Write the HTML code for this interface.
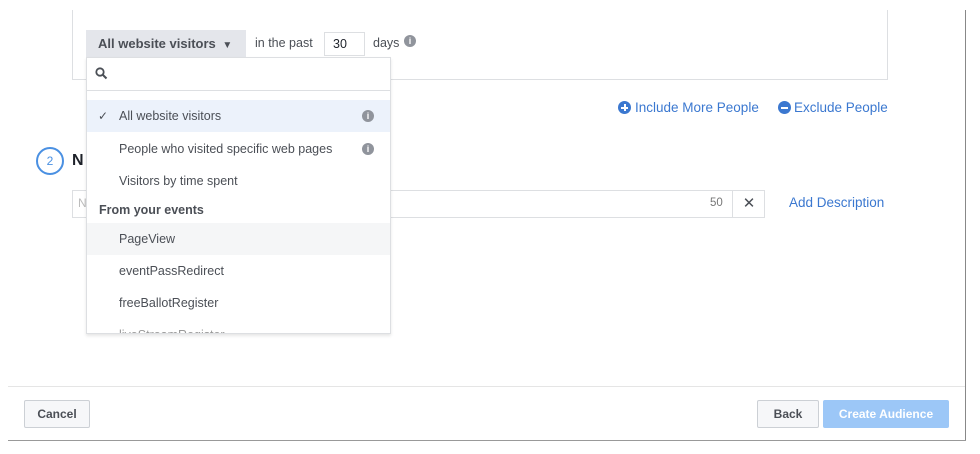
<!DOCTYPE html>
<html><head><style>
*{margin:0;padding:0;box-sizing:border-box}
body{width:980px;height:454px;background:#fff;font-family:"Liberation Sans",sans-serif;position:relative;overflow:hidden;color:#4b4f56}
.a{position:absolute}
.blue{color:#3b78d0;font-size:13.5px}
.item{position:absolute;left:0;width:304px;height:32px;font-size:12.5px;color:#4b4f56;line-height:32px;padding-left:32px}
.info{position:absolute;right:17px;top:10px;width:12px;height:12px;border-radius:50%;background:#90949c;color:#fff;font-size:9px;line-height:12px;text-align:center;font-weight:bold}
.btn{position:absolute;border:1px solid #ccd0d5;background:#f6f7f9;border-radius:2px;font-size:12px;font-weight:bold;color:#4b4f56;text-align:center;line-height:26px}
</style></head><body>
<div class="a" style="left:965px;top:10px;width:1px;height:431px;background:#888"></div>
<div class="a" style="left:8px;top:440px;width:958px;height:1px;background:#999"></div>
<div class="a" style="left:8px;top:386px;width:957px;height:1px;background:#e5e5e5"></div>
<div class="a" style="left:72px;top:10px;width:816px;height:70px;border:1px solid #dddfe2;border-top:none"></div>
<div class="a" style="left:86px;top:30px;width:160px;height:27px;background:#e4e6eb;font-size:13px;font-weight:bold;line-height:27px;padding-left:12px;color:#4b4f56">All website visitors <span style="font-size:10px;margin-left:3px">▼</span></div>
<div class="a" style="left:255px;top:36px;font-size:12.5px">in the past</div>
<div class="a" style="left:324px;top:32px;width:41px;height:24px;border:1px solid #dddfe2;font-size:12.5px;line-height:22px;padding-left:8px;color:#1d2129">30</div>
<div class="a" style="left:373px;top:36px;font-size:12.5px">days</div>
<div class="a" style="left:404px;top:35px;width:12px;height:12px;border-radius:50%;background:#90949c;color:#fff;font-size:9px;line-height:12px;text-align:center;font-weight:bold">i</div>
<div class="a" style="left:618px;top:101px;width:13px;height:13px;border-radius:50%;background:#3b78d0"><div style="position:absolute;left:3px;top:5.5px;width:7px;height:2px;background:#fff"></div><div style="position:absolute;left:5.5px;top:3px;width:2px;height:7px;background:#fff"></div></div>
<div class="a blue" style="left:635px;top:100px">Include More People</div>
<div class="a" style="left:778px;top:101px;width:13px;height:13px;border-radius:50%;background:#3b78d0"><div style="position:absolute;left:3px;top:5.5px;width:7px;height:2px;background:#fff"></div></div>
<div class="a blue" style="left:794px;top:100px">Exclude People</div>
<div class="a" style="left:36px;top:147px;width:28px;height:28px;border:2px solid #4a90e2;border-radius:50%;color:#4a90e2;font-size:12px;text-align:center;line-height:24px">2</div>
<div class="a" style="left:72px;top:152px;font-size:16px;font-weight:bold;color:#1d2129">N</div>
<div class="a" style="left:72px;top:190px;width:693px;height:28px;border:1px solid #dddfe2"></div>
<div class="a" style="left:78px;top:196px;font-size:12px;color:#bbb">N</div>
<div class="a" style="left:710px;top:197px;font-size:11.5px;color:#777">50</div>
<div class="a" style="left:732px;top:190px;width:33px;height:28px;border-left:1px solid #dddfe2;text-align:center;line-height:27px;font-size:15px;color:#4b4f56">✕</div>
<div class="a blue" style="left:789px;top:195px">Add Description</div>
<div class="a" style="left:86px;top:57px;width:305px;height:277px;background:#fff;border:1px solid #dddfe2;box-shadow:0 2px 3px rgba(0,0,0,.1);overflow:hidden">
 <div class="a" style="left:0;top:0;width:304px;height:33px;border-bottom:1px solid #dddfe2">
  <svg class="a" style="left:8px;top:9px" width="13" height="13" viewBox="0 0 13 13"><circle cx="5" cy="5" r="3.7" fill="none" stroke="#4b4f56" stroke-width="1.8"/><path d="M8 8l3.5 3.5" stroke="#4b4f56" stroke-width="2"/></svg>
 </div>
 <div class="item" style="top:42px;background:#ecf2fb">All website visitors<span class="a" style="left:11px;top:0;font-size:12px">✓</span><span class="info">i</span></div>
 <div class="item" style="top:75px">People who visited specific web pages<span class="info">i</span></div>
 <div class="item" style="top:107px">Visitors by time spent</div>
 <div class="a" style="left:12px;top:145px;font-size:12.5px;font-weight:bold;color:#4b4f56">From your events</div>
 <div class="item" style="top:165px;background:#f5f6f7">PageView</div>
 <div class="item" style="top:197px">eventPassRedirect</div>
 <div class="item" style="top:229px">freeBallotRegister</div>
 <div class="item" style="top:261px;color:#999">liveStreamRegister</div>
</div>
<div class="btn" style="left:24px;top:400px;width:66px;height:28px">Cancel</div>
<div class="btn" style="left:757px;top:400px;width:62px;height:28px">Back</div>
<div class="a" style="left:823px;top:400px;width:126px;height:28px;background:#9cc7f7;border-radius:2px;color:#fff;font-size:12px;font-weight:bold;text-align:center;line-height:28px">Create Audience</div>
</body></html>
